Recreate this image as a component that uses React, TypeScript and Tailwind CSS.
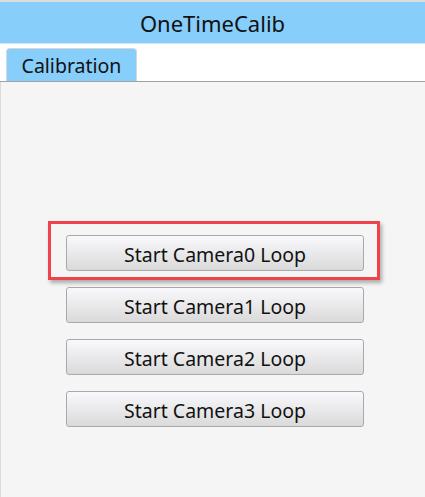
import React from 'react';

const cameras = ['Start Camera0 Loop', 'Start Camera1 Loop', 'Start Camera2 Loop', 'Start Camera3 Loop'];

export default function App() {
  return (
    <div
      className="w-[425px] h-[497px] flex flex-col bg-white text-[#111] overflow-hidden"
      style={{ fontFamily: '"Noto Sans", "Open Sans", sans-serif' }}
    >
      {/* Title bar */}
      <div className="h-[44px] border-t-2 border-[#dcdcdc] border-b border-b-[#d8e4ee] bg-[#87cefa] flex items-center justify-center">
        <span className="text-[22px] leading-none">OneTimeCalib</span>
      </div>

      {/* Tab strip */}
      <div className="h-[38px] flex items-end pl-[6px] border-b border-[#a0a0a0]">
        <div className="h-[33px] w-[131px] bg-[#87cefa] border border-b-0 border-[#d0d8e0] rounded-t-[4px] flex items-center justify-center">
          <span className="text-[19.5px] leading-none pt-[2px]">Calibration</span>
        </div>
      </div>

      {/* Content */}
      <div className="flex-1 bg-[#f5f5f5] border-l border-[#dcdcdc] pt-[153px] pl-[65px]">
        <div className="flex flex-col gap-[16px] w-[298px]">
          {cameras.map((label, i) => (
            <div key={label} className="relative">
              {i === 0 && (
                <div className="absolute -left-[18px] -right-[16px] -top-[14px] -bottom-[9px] border-[3px] border-[#f0424a] shadow-[2px_3px_4px_rgba(0,0,0,0.3)]" />
              )}
              <button className="relative w-full h-[36px] pt-[3px] rounded-[3px] border border-[#a9a9a9] bg-gradient-to-b from-[#f9f9fd] to-[#dadada] text-[19.5px] leading-none text-[#111]">
                {label}
              </button>
            </div>
          ))}
        </div>
      </div>
    </div>
  );
}
